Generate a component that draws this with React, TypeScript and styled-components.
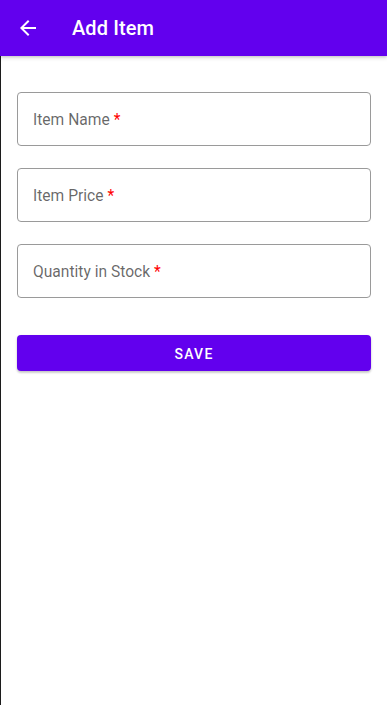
import React from "react";
import styled, { createGlobalStyle } from "styled-components";

const Global = createGlobalStyle`
  html, body { margin: 0; padding: 0; background: #ffffff; }
  body { font-family: Roboto, "Noto Sans", sans-serif; }
  #root { min-height: 705px; }
`;

const Screen = styled.div`
  display: flex;
  flex-direction: column;
  min-height: 705px;
  background: #ffffff;
`;

const AppBar = styled.header`
  height: 56px;
  background: #6200ee;
  display: flex;
  align-items: center;
  box-shadow: 0 2px 4px rgba(0, 0, 0, 0.14), 0 1px 2px rgba(0, 0, 0, 0.1);
  position: relative;
  z-index: 1;
`;

const BackButton = styled.button`
  width: 24px;
  height: 24px;
  margin-left: 16px;
  padding: 0;
  border: none;
  background: transparent;
  display: flex;
  align-items: center;
  justify-content: center;
  color: #ffffff;
`;

const Title = styled.h1`
  margin: 0 0 0 32px;
  font-family: Roboto, sans-serif;
  font-size: 20px;
  font-weight: 500;
  color: #ffffff;
  letter-spacing: 0.1px;
`;

const Body = styled.main`
  flex: 1;
  border-left: 1px solid #1c1c1c;
  padding: 36px 16px 0 16px;
  display: flex;
  flex-direction: column;
`;

const Form = styled.div`
  display: flex;
  flex-direction: column;
  gap: 22px;
`;

const Field = styled.label`
  height: 54px;
  box-sizing: border-box;
  border: 1px solid #9a9a9a;
  border-radius: 4px;
  display: flex;
  align-items: center;
  padding: 2px 0 0 15px;
  font-family: Roboto, sans-serif;
  font-size: 15.6px;
  color: rgba(0, 0, 0, 0.6);
  letter-spacing: 0;
`;

const Required = styled.span`
  color: #ff0000;
  margin-left: 4px;
`;

const SaveButton = styled.button`
  margin-top: 37px;
  height: 36px;
  padding-top: 2px;
  border: none;
  border-radius: 4px;
  background: #6200ee;
  color: #ffffff;
  font-family: Roboto, sans-serif;
  font-size: 14px;
  font-weight: 500;
  letter-spacing: 1.25px;
  text-transform: uppercase;
  box-shadow: 0 2px 2px rgba(0, 0, 0, 0.14), 0 1px 3px rgba(0, 0, 0, 0.12);
`;

const fields = ["Item Name", "Item Price", "Quantity in Stock"];

export default function App() {
  return (
    <>
      <Global />
      <Screen>
        <AppBar>
          <BackButton aria-label="Back">
            <svg width="24" height="24" viewBox="0 0 24 24" fill="#ffffff">
              <path d="M20 11H7.83l5.59-5.59L12 4l-8 8 8 8 1.41-1.41L7.83 13H20v-2z" />
            </svg>
          </BackButton>
          <Title>Add Item</Title>
        </AppBar>
        <Body>
          <Form>
            {fields.map((f) => (
              <Field key={f}>
                {f}
                <Required>*</Required>
              </Field>
            ))}
          </Form>
          <SaveButton>Save</SaveButton>
        </Body>
      </Screen>
    </>
  );
}
